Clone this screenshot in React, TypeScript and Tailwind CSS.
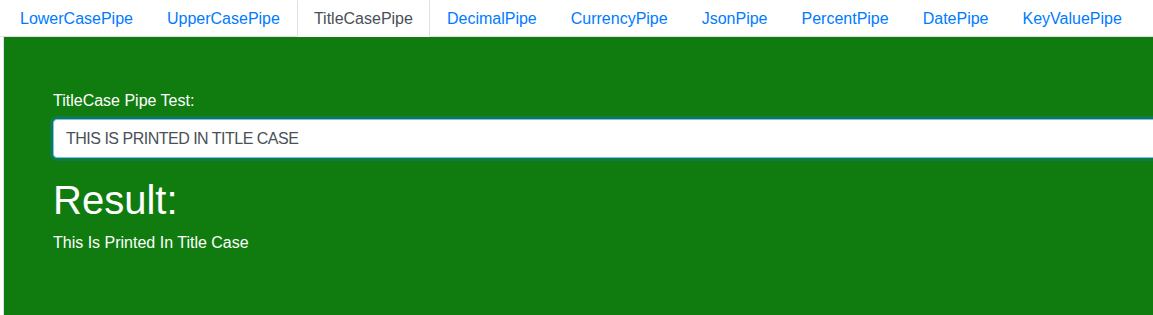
import React, { useState } from 'react'

const tabs = [
  'LowerCasePipe',
  'UpperCasePipe',
  'TitleCasePipe',
  'DecimalPipe',
  'CurrencyPipe',
  'JsonPipe',
  'PercentPipe',
  'DatePipe',
  'KeyValuePipe',
]

const toTitleCase = (s: string) =>
  s.toLowerCase().replace(/\b\w/g, (c) => c.toUpperCase())

export default function App() {
  const [active, setActive] = useState('TitleCasePipe')
  const [value, setValue] = useState('THIS IS PRINTED IN TITLE CASE')

  return (
    <div
      className="w-[1153px] h-[315px] overflow-hidden bg-white"
      style={{ fontFamily: '"Liberation Sans", Arial, sans-serif' }}
    >
      {/* Tabs */}
      <ul className="flex pl-[3px] border-b border-[#dee2e6] h-[37px]">
        {tabs.map((tab) => (
          <li key={tab} className="-mb-px">
            <button
              onClick={() => setActive(tab)}
              className={`h-[37px] px-4 border text-base leading-6 ${
                active === tab
                  ? 'border-[#dee2e6] border-t-transparent border-b-white bg-white text-[#495057]'
                  : 'border-transparent text-[#007bff]'
              }`}
            >
              {tab}
            </button>
          </li>
        ))}
      </ul>

      {/* Panel */}
      <div className="ml-[3px] border-l border-[#dee2e6] bg-[#107c10] h-[280px] pl-[49px] pt-[52px] text-white">
        <label className="block text-base leading-6 mb-[6px]">TitleCase Pipe Test:</label>
        <input
          value={value}
          onChange={(e) => setValue(e.target.value)}
          className="block w-[1120px] h-[39px] px-3 rounded border border-[#80bdff] bg-white text-[#495057] text-base tracking-[-0.5px] shadow-[0_0_0_3px_rgba(0,123,255,0.25)] outline-none"
        />
        <h1 className="mt-[18px] text-[40px] leading-[48px] font-medium">Result:</h1>
        <p className="mt-[7px] text-base leading-6">{toTitleCase(value)}</p>
      </div>
    </div>
  )
}
